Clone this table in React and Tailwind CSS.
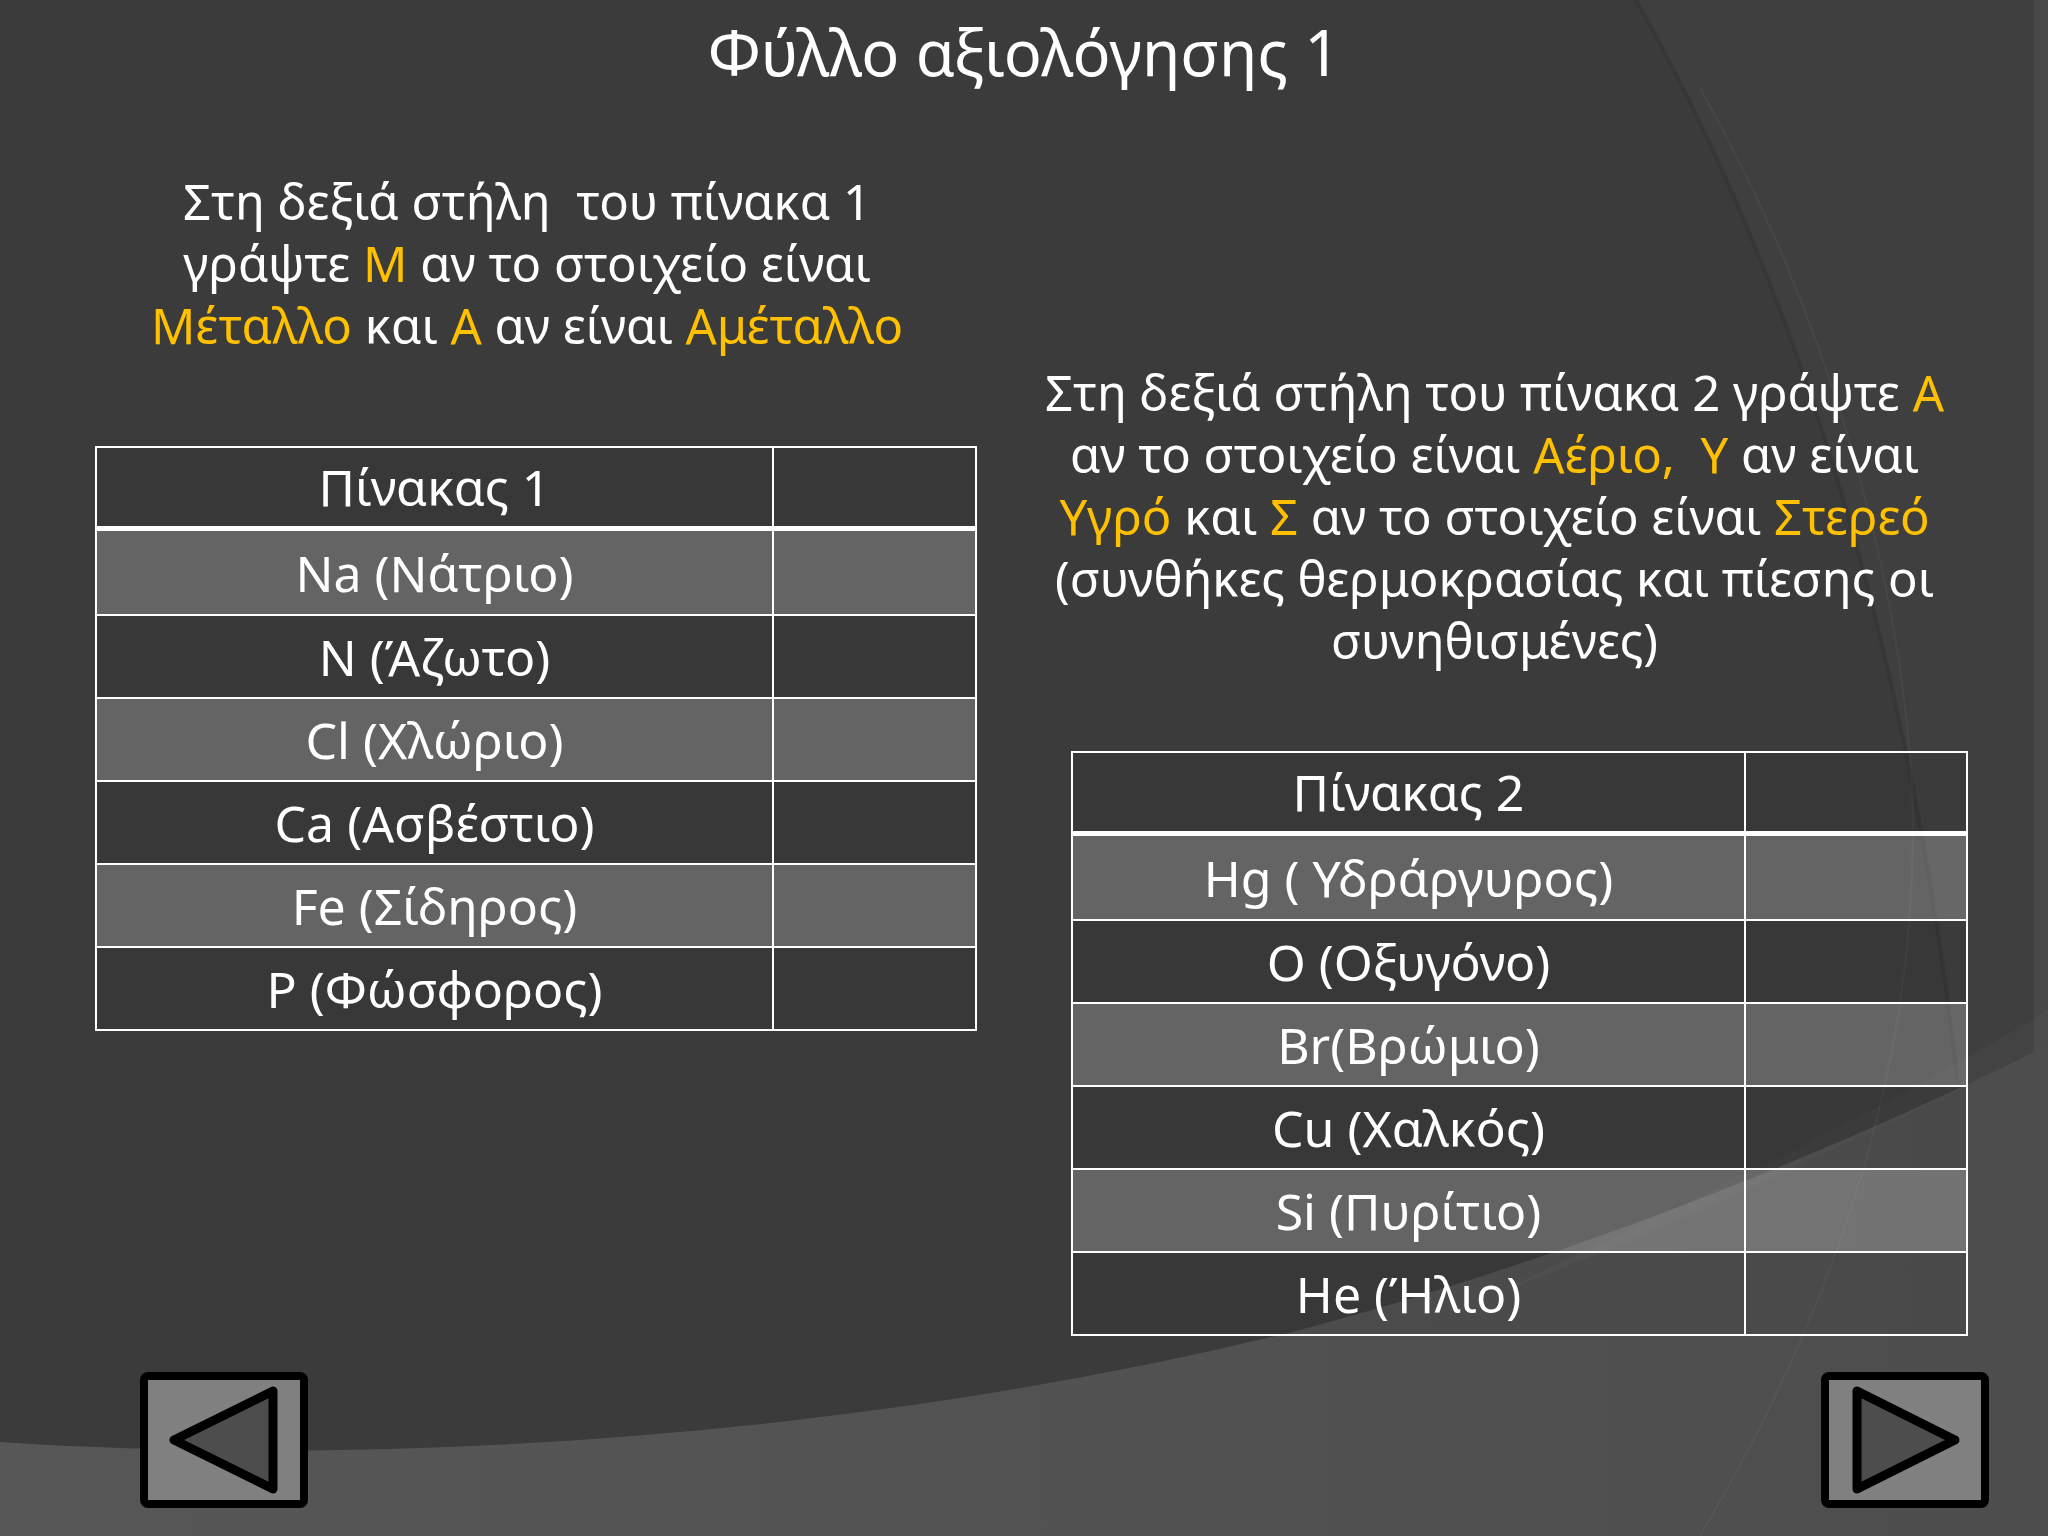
import React from 'react'

const table1 = [
  'Na (Νάτριο)',
  'N (Άζωτο)',
  'Cl (Χλώριο)',
  'Ca (Ασβέστιο)',
  'Fe (Σίδηρος)',
  'P (Φώσφορος)',
]

const table2 = [
  'Hg ( Υδράργυρος)',
  'O (Οξυγόνο)',
  'Br(Βρώμιο)',
  'Cu (Χαλκός)',
  'Si (Πυρίτιο)',
  'He (Ήλιο)',
]

function Y({ children }) {
  return <span className="text-[#ffc000]">{children}</span>
}

function Backdrop() {
  return (
    <svg className="absolute inset-0" width="2048" height="1536" viewBox="0 0 2048 1536">
      <defs>
        <linearGradient id="low" x1="0" y1="0" x2="1" y2="0">
          <stop offset="0" stopColor="#575757" />
          <stop offset="1" stopColor="#4d4d4d" />
        </linearGradient>
      </defs>
      <rect width="2048" height="1536" fill="#3b3b3b" />
      <path d="M1636 0 C1760 220 1900 560 1960 1100 L2048 1100 L2048 0 Z" fill="#3f3f3f" />
      <path d="M1636 0 C1760 220 1900 560 1960 1100" fill="none" stroke="#333" strokeWidth="4" opacity="0.6" />
      <rect x="2034" y="0" width="14" height="1536" fill="#484848" />
      <path d="M0 1442 C420 1470 900 1430 1300 1330 C1600 1250 1880 1130 2048 1045 L2048 1536 L0 1536 Z" fill="url(#low)" />
      <path d="M1500 1290 C1700 1200 1900 1100 2048 1010 L2048 1045 C1880 1130 1700 1215 1520 1285 Z" fill="#ffffff" opacity="0.025" />
      <path d="M1700 88 C1820 300 1900 560 1912 790 C1920 1000 1870 1250 1700 1536" fill="none" stroke="#ffffff" strokeWidth="2" opacity="0.04" />
    </svg>
  )
}

function DataTable({ title, rows, first }) {
  return (
    <div className="border-2 border-white text-white text-[50px] leading-none">
      <div className="flex h-[83px] border-b-[5px] border-white bg-black/5">
        <div className={`flex items-center justify-center ${first}`}>{title}</div>
        <div className="flex-1 border-l-2 border-white" />
      </div>
      {rows.map((r, i) => (
        <div
          key={r}
          className={`flex h-[83px] ${i > 0 ? 'border-t-2 border-white' : ''} ${
            i % 2 === 0 ? 'bg-[rgba(255,255,255,0.21)]' : 'bg-black/5'
          }`}
        >
          <div className={`flex items-center justify-center ${first}`}>{r}</div>
          <div className="flex-1 border-l-2 border-white" />
        </div>
      ))}
    </div>
  )
}

function NavButton({ dir }) {
  const pts = dir === 'left' ? '34,68 133,19 133,117' : '36,19 36,117 134,68'
  return (
    <svg width="168" height="136" viewBox="0 0 168 136">
      <rect x="4" y="4" width="160" height="128" rx="4" fill="#808080" stroke="#000" strokeWidth="8" />
      <polygon points={pts} fill="#4d4d4d" stroke="#000" strokeWidth="9" strokeLinejoin="round" />
    </svg>
  )
}

export default function App() {
  return (
    <div
      className="relative w-[2048px] h-[1536px] overflow-hidden bg-[#3b3b3b] text-white"
      style={{ fontFamily: '"Noto Sans", "DejaVu Sans", sans-serif' }}
    >
      <Backdrop />
      <div className="relative flex h-full flex-col">
        <h1 className="pt-[13px] text-center text-[63px] leading-[78px] font-normal">
          Φύλλο αξιολόγησης 1
        </h1>

        <div className="flex items-start">
          <div className="ml-[95px] w-[882px]">
            <div className="mt-[79px] -ml-[18px] text-center text-[49px] leading-[62px] whitespace-pre">
              <div>Στη δεξιά στήλη  του πίνακα 1</div>
              <div>
                γράψτε <Y>M</Y> αν το στοιχείο είναι
              </div>
              <div>
                <Y>Μέταλλο</Y> και <Y>Α</Y> αν είναι <Y>Αμέταλλο</Y>
              </div>
            </div>
            <div className="mt-[90px]">
              <DataTable title="Πίνακας 1" rows={table1} first="w-[675px]" />
            </div>
          </div>

          <div className="ml-[94px] w-[897px]">
            <div className="mt-[270px] -ml-[50px] text-center text-[49px] leading-[62px] whitespace-pre">
              <div>
                Στη δεξιά στήλη του πίνακα 2 γράψτε <Y>Α</Y>
              </div>
              <div>
                αν το στοιχείο είναι <Y>Αέριο,  Υ</Y> αν είναι
              </div>
              <div>
                <Y>Υγρό</Y> και <Y>Σ</Y> αν το στοιχείο είναι <Y>Στερεό</Y>
              </div>
              <div>(συνθήκες θερμοκρασίας και πίεσης οι</div>
              <div>συνηθισμένες)</div>
            </div>
            <div className="mt-[80px]">
              <DataTable title="Πίνακας 2" rows={table2} first="w-[671px]" />
            </div>
          </div>
        </div>

        <div className="mt-auto flex items-end justify-between pb-[28px] pl-[140px] pr-[59px]">
          <NavButton dir="left" />
          <NavButton dir="right" />
        </div>
      </div>
    </div>
  )
}
